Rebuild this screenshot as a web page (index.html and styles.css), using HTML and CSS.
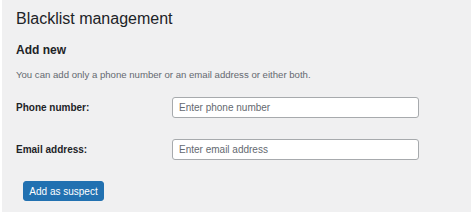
FILE: index.html
```html
<!DOCTYPE html>
<html lang="en">
<head>
    <meta charset="UTF-8">
    <title>Blacklist management</title>
    <link rel="stylesheet" href="styles.css">
</head>
<body>

<div class="wrap">
    <h1 class="page-title">Blacklist management</h1>
    <h2 class="section-title">Add new</h2>
    <p class="description">You can add only a phone number or an email address or either both.</p>

    <form class="form" onsubmit="return false">
        <div class="form-row">
            <label class="form-label" for="phone">Phone number:</label>
            <input type="text" id="phone" class="form-input" placeholder="Enter phone number">
        </div>
        <div class="form-row">
            <label class="form-label" for="email">Email address:</label>
            <input type="text" id="email" class="form-input" placeholder="Enter email address">
        </div>
        <button type="submit" class="button-primary">Add as suspect</button>
    </form>
</div>

</body>
</html>
```

FILE: styles.css
```css
body {
    margin: 0;
    background-color: #ffffff;
    font-family: "Liberation Sans", Arial, sans-serif;
    color: #1d2327;
}
.wrap {
    height: 212px;
    margin: 0 3px 0 2px;
    padding: 9px 14px 0;
    background-color: #f0f0f1;
    box-sizing: border-box;
    overflow: hidden;
}
.page-title {
    margin: 0;
    font-size: 16px;
    font-weight: 400;
    line-height: 20px;
}
.section-title {
    margin: 13px 0 0;
    font-size: 12px;
    font-weight: 700;
    line-height: 16px;
}
.description {
    margin: 10px 0 0;
    font-size: 9.6px;
    line-height: 14px;
    color: #646970;
}
.form {
    margin-top: 15px;
}
.form-row {
    display: flex;
    align-items: center;
    height: 21px;
    margin-bottom: 21px;
}
.form-label {
    width: 156px;
    font-size: 10px;
    font-weight: 700;
    color: #1d2327;
}
.form-input {
    width: 247px;
    height: 21px;
    box-sizing: border-box;
    padding: 0 6px;
    font-family: inherit;
    font-size: 10px;
    color: #2c3338;
    background-color: #ffffff;
    border: 1px solid #a7aaad;
    border-radius: 3px;
}
.form-input::placeholder {
    color: #646970;
}
.button-primary {
    display: block;
    margin: 22px 0 0 7px;
    width: 81px;
    height: 20px;
    padding: 0;
    font-family: inherit;
    font-size: 10px;
    color: #ffffff;
    background-color: #2271b1;
    border: 1px solid #2271b1;
    border-radius: 3px;
    cursor: pointer;
}
.form-row + .button-primary {
    margin-top: 1px;
}
```
